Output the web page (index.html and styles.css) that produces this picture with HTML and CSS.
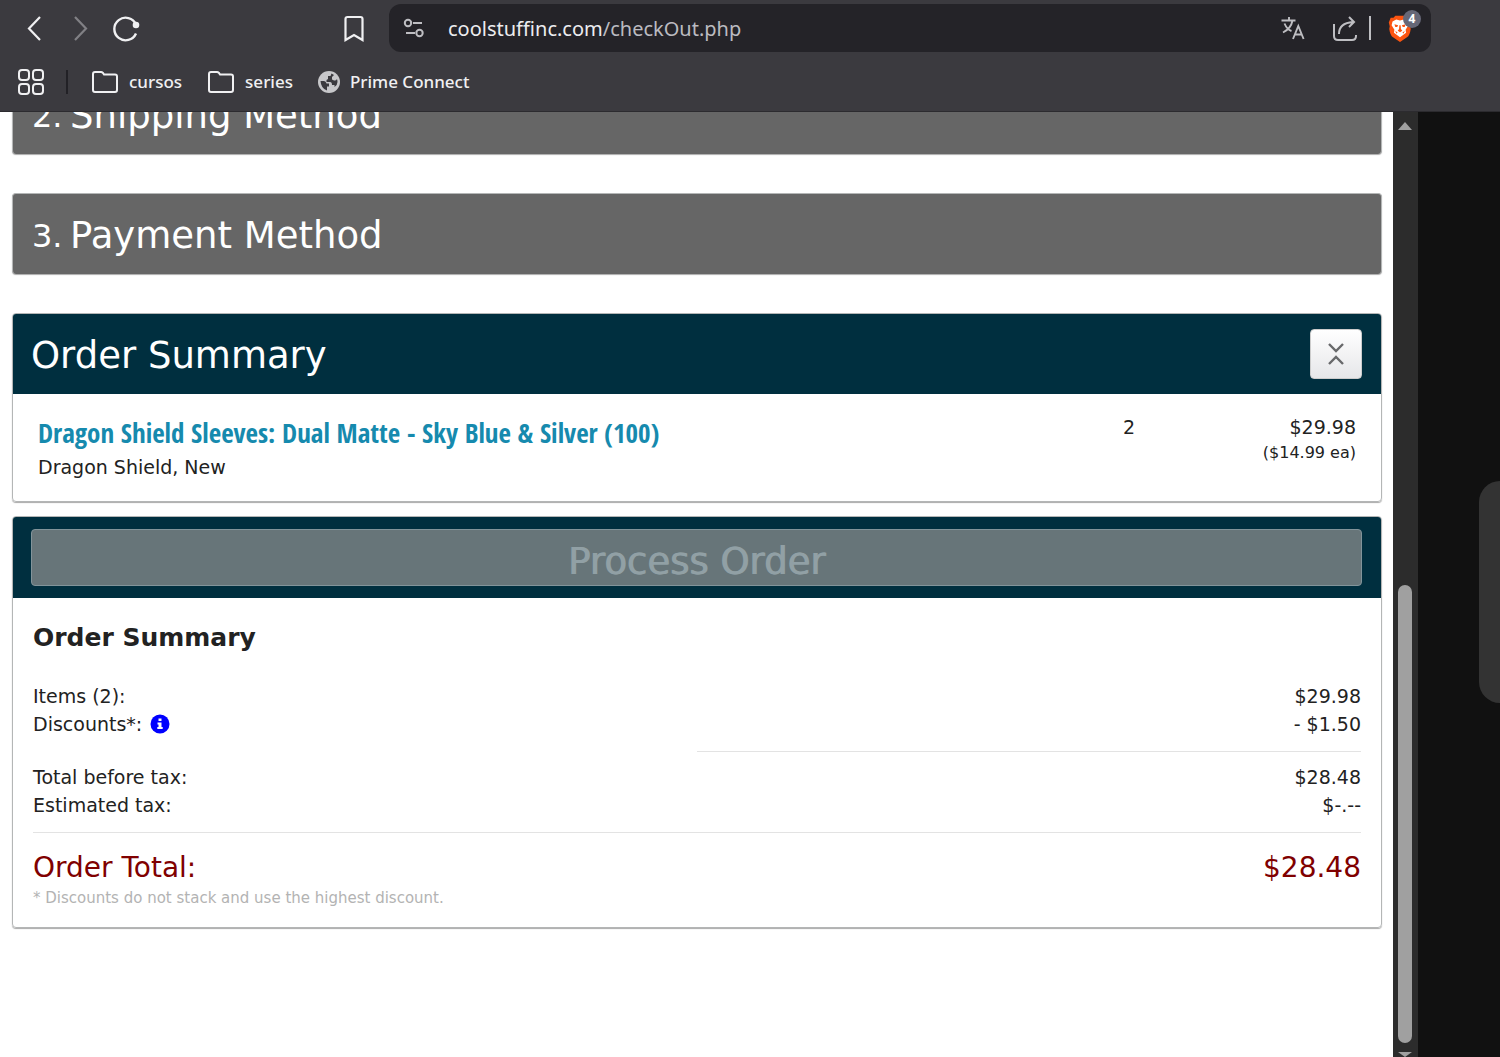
FILE: index.html
```html
<!DOCTYPE html>
<html lang="en">
<head>
<meta charset="utf-8">
<meta name="viewport" content="width=device-width, initial-scale=1">
<title>Checkout</title>
<link rel="stylesheet" href="styles.css">
</head>
<body>
<header class="chrome">
  <div class="toolbar">
    <div class="nav-buttons">
      <button class="icon-button" aria-label="Back"><svg width="28" height="32" viewBox="0 0 28 32"><path d="M19 5 8 16.500 19 28" stroke-width="2.200"/></svg></button>
      <button class="icon-button dim" aria-label="Forward"><svg width="28" height="32" viewBox="0 0 28 32"><path d="m8 5 11 11.500L8 28" stroke-width="2.200"/></svg></button>
      <button class="icon-button" aria-label="Reload"><svg width="28" height="32" viewBox="0 0 28 32"><path d="M23 12.500A11.300 11.300 0 1 0 23 21.500" stroke-width="2.400"/><circle cx="23" cy="13" r="3.300" fill="currentColor" stroke="none"/></svg></button>
    </div>
    <button class="icon-button" aria-label="Bookmark this page"><svg width="28" height="32" viewBox="0 0 28 32"><path d="M7.500 5h13q2 0 2 2v21l-8.500-5-8.500 5V7q0-2 2-2Z" stroke-width="2.200"/></svg></button>
    <div class="address">
      <button class="icon-button muted" aria-label="Site settings"><svg width="24" height="24" viewBox="0 0 24 24" stroke-width="2"><circle cx="6" cy="7" r="3.200"/><path d="M11 7h9M4 17h9"/><circle cx="17.500" cy="17" r="3.200"/></svg></button>
      <a class="url" href="#">coolstuffinc.com<span class="path">/checkOut.php</span></a>
      <div class="address-actions">
        <button class="icon-button muted" aria-label="Translate"><svg width="26" height="28" viewBox="0 0 26 28" stroke-width="1.900"><path d="M2.500 6.500h14M10 3v3.500M4 18.500Q12 14.500 13.500 6.500M5.500 9.500Q8 15.500 12.500 17M14 25l5.300-13L24.600 25M16 20.500h7"/></svg></button>
        <button class="icon-button muted" aria-label="Share"><svg width="26" height="28" viewBox="0 0 26 28" stroke-width="2"><path d="M3 10v12q0 4 4 4h14q4 0 4-4v-1M8 20q0-11 14-12M18 3l5 5-5 5"/></svg></button>
        <span class="address-divider"></span>
        <button class="icon-button shield" aria-label="Brave Shields, 4 blocked"><svg width="24" height="28" viewBox="0 0 24 30"><path d="M7 2h10l2 2h3l2 5-1 4 .5 3q-1 7-4 9L12 30l-7.500-5q-3-2-4-9L1 13 0 9l2-5h3Z" fill="#fb5410" stroke="none"/><path d="M4 8 8 6l4 1 4-1 4 2 1 4-3 5 .5 3L12 25l-6.500-5 .5-3-3-5Z" fill="#fff" stroke="none"/><path d="m6 11 4 1-1 2-2 0zm12 0-4 1 1 2 2 0zM11.300 12h1.400l.3 4 1.500 2-2.500 1.500L9.500 18l1.500-2zM7 18l2.500 2-1.500 1zm10 0-2.500 2 1.500 1z" fill="#fb5410" stroke="none"/></svg><span class="badge">4</span></button>
      </div>
    </div>
  </div>
  <nav class="bookmarks" aria-label="Bookmarks">
    <button class="icon-button" aria-label="Apps"><svg width="28" height="28" viewBox="0 0 28 28" stroke-width="2"><rect x="2" y="2" width="10" height="10" rx="3"/><rect x="16" y="2" width="10" height="10" rx="3"/><rect x="2" y="16" width="10" height="10" rx="3"/><rect x="16" y="16" width="10" height="10" rx="3"/></svg></button>
    <span class="bookmark-divider"></span>
    <a class="bookmark" href="#"><svg width="28" height="24" viewBox="0 0 28 24" stroke-width="2"><path d="M4 2h6q1 0 2 1l1 1.500h11q2 0 2 2V20q0 2-2 2H4q-2 0-2-2V4q0-2 2-2Z"/></svg>cursos</a>
    <a class="bookmark" href="#"><svg width="28" height="24" viewBox="0 0 28 24" stroke-width="2"><path d="M4 2h6q1 0 2 1l1 1.500h11q2 0 2 2V20q0 2-2 2H4q-2 0-2-2V4q0-2 2-2Z"/></svg>series</a>
    <a class="bookmark site" href="#"><svg width="22" height="22" viewBox="0 0 22 22"><circle cx="11" cy="11" r="11" fill="#c7c7ca" stroke="none"/><path d="M13.500 2.500 12.500 5H10v3L8.500 9v2H12q2 0 2 3h2.500v2q3-2 3-5 0-1.500-.5-3-1 2-3 1.500L14 8.500V6l2-2ZM2.500 10H6q2 0 2.500 2.500H11v3H9V19.500q-6-2-6.500-9.500Z" fill="#3b3a3f" stroke="none"/></svg>Prime Connect</a>
  </nav>
</header>
<div class="workspace">
  <main class="page">
    <section class="panel step"><h2><span class="step-number">2.</span>Shipping Method</h2></section>
    <section class="panel step"><h2><span class="step-number">3.</span>Payment Method</h2></section>
    <section class="panel order-items">
      <div class="panel-header">
        <h2>Order Summary</h2>
        <button class="collapse" aria-label="Collapse order summary"><svg width="18" height="24" viewBox="0 0 18 24"><path d="m2 2 7 7 7-7M2 22l7-7 7 7" fill="none" stroke="#68696b" stroke-width="2.400"/></svg></button>
      </div>
      <table class="items">
        <tr>
          <td><a class="item-name" href="#">Dragon Shield Sleeves: Dual Matte - Sky Blue &amp; Silver (100)</a><div class="item-info">Dragon Shield, New</div></td>
          <td class="quantity">2</td>
          <td class="price">$29.98<div class="unit-price">($14.99 ea)</div></td>
        </tr>
      </table>
    </section>
    <section class="panel checkout">
      <div class="panel-header process-bar"><button class="process" disabled>Process Order</button></div>
      <div class="summary">
        <h3>Order Summary</h3>
        <table class="totals">
          <tbody>
            <tr><th scope="row">Items (2):</th><td>$29.98</td></tr>
            <tr><th scope="row"><span class="discount">Discounts*: <button class="info" aria-label="About discounts"><svg width="20" height="20" viewBox="0 0 20 20"><circle cx="10" cy="10" r="9.500" fill="#00f"/><path d="M8.500 4.500h3V7h-3zM7.500 8.500h4V13h1.200v2H7.300v-2h1.200v-2.500h-1Z" fill="#fff"/></svg></button></span></th><td>- $1.50</td></tr>
          </tbody>
          <tbody class="tax">
            <tr><th scope="row">Total before tax:</th><td>$28.48</td></tr>
            <tr><th scope="row">Estimated tax:</th><td>$-.--</td></tr>
          </tbody>
          <tfoot><tr><th scope="row">Order Total:</th><td>$28.48</td></tr></tfoot>
        </table>
        <p class="note">* Discounts do not stack and use the highest discount.</p>
      </div>
    </section>
  </main>
  <div class="scrollbar" aria-hidden="true">
    <span class="arrow-up"></span>
    <span class="track-space"></span>
    <span class="thumb"></span>
    <span class="arrow-down"></span>
  </div>
  <aside class="side"><span class="handle"></span></aside>
</div>
</body>
</html>
```
FILE: styles.css
```css
* { box-sizing: border-box; }
body {
  margin: 0;
  height: 100vh;
  display: flex;
  flex-direction: column;
  overflow: hidden;
  background: #111;
  color: #222;
  font-family: "DejaVu Sans", sans-serif;
  font-size: 19px;
  line-height: 28px;
}
h2, h3, p { margin: 0; font-weight: 400; }
button { margin: 0; padding: 0; border: 0; background: none; color: inherit; font: inherit; }
a { color: inherit; text-decoration: none; }
svg { display: block; flex: none; }
table { width: 100%; border-collapse: collapse; }
th, td { padding: 0; vertical-align: top; font-weight: 400; text-align: left; }

.chrome {
  flex: none;
  height: 112px;
  background: #3b3a3f;
  border-bottom: 1px solid #2c2b2f;
  color: #f0f0f2;
  font-family: "Noto Sans", sans-serif;
}
.chrome svg { fill: none; stroke: currentColor; }
.toolbar { display: flex; align-items: center; padding: 4px 69px 0 21px; }
.nav-buttons { display: flex; gap: 18px; width: 319px; }
.icon-button { display: flex; align-items: center; justify-content: center; }
.dim { color: #818085; }
.muted { color: #bebec2; }
.address {
  flex: 1;
  display: flex;
  align-items: center;
  height: 48px;
  margin-left: 21px;
  padding: 0 15px 0 13px;
  border-radius: 12px;
  background: #242328;
}
.url { flex: 1; margin-left: 22px; padding-top: 1px; font-size: 20px; color: #ececef; }
.path { color: #bbbbc0; }
.address-actions { display: flex; align-items: center; }
.address-actions .icon-button + .icon-button { margin-left: 26px; }
.address-divider { width: 2px; height: 24px; margin: 0 17px 0 12px; background: #bebec2; }
.shield { position: relative; width: 28px; justify-content: flex-start; }
.badge {
  position: absolute;
  top: -4px;
  right: -5px;
  width: 18px;
  height: 18px;
  border-radius: 50%;
  background: #666777;
  color: #fff;
  font-size: 12px;
  font-weight: 700;
  line-height: 18px;
}
.bookmarks { display: flex; align-items: center; height: 60px; padding-left: 17px; font-size: 17px; font-weight: 500; }
.bookmark-divider { width: 2px; height: 24px; margin: 0 23px 0 21px; background: #222126; }
.bookmark { display: flex; align-items: center; gap: 10px; margin-right: 25px; }

.workspace { flex: 1; min-height: 0; display: flex; }
.page { flex: 1; overflow: hidden; padding: 0 11px 0 12px; background: #fff; }
.panel { border: 1px solid #b4b6b6; border-radius: 4px; box-shadow: 0 1px 1px #aaa; overflow: hidden; }
.panel h2 { padding-top: 4px; color: #fff; font-size: 37px; line-height: 76px; }
.step { margin-bottom: 39px; padding-left: 19px; border-width: 1px 1px 0; background: #666; }
.step:first-child { margin-top: -39px; }
.step h2 { display: flex; }
.step-number { width: 38px; font-size: 32px; }
.panel-header { display: flex; align-items: center; justify-content: space-between; height: 80px; padding: 0 19px 0 18px; background: #002f3f; }
.collapse {
  display: flex;
  align-items: center;
  justify-content: center;
  width: 52px;
  height: 50px;
  border: 1px solid #ccc;
  border-radius: 4px;
  background: linear-gradient(#fff, #e6e7e9);
}
.order-items { margin-bottom: 14px; padding-bottom: 20px; }
.items { margin-top: 19px; }
.items td:first-child { padding-left: 25px; }
.item-name {
  color: #168aae;
  font-family: "Open Sans Condensed", "Liberation Sans Narrow", "Open Sans", sans-serif;
  font-size: 27px;
  font-weight: 700;
  line-height: 40px;
}
.item-info { line-height: 28px; }
.items .quantity { width: 60px; text-align: center; }
.items .price { width: 222px; padding-right: 25px; text-align: right; }
.unit-price { font-size: 16px; line-height: 24px; }
.process-bar { height: 81px; }
.process {
  width: 100%;
  height: 57px;
  padding-top: 8px;
  border: 1px solid #82949a;
  border-radius: 4px;
  background: #677579;
  color: #91a0a5;
  font-size: 37px;
  text-shadow: 1px 0 #91a0a5;
}
.summary { padding: 22px 20px 17px; }
.summary h3 { margin-bottom: 26px; font-size: 25px; font-weight: 700; line-height: 36px; }
.totals th, .totals td { width: 50%; }
.totals td { text-align: right; }
.discount { display: flex; align-items: center; gap: 8px; }
.totals tbody tr:last-child > * { padding-bottom: 13px; }
.tax tr:first-child > * { padding-top: 11px; }
.tax tr:first-child td, .totals tfoot th, .totals tfoot td { border-top: 1px solid #e3e3e3; }
.totals tfoot th, .totals tfoot td { padding-top: 17px; color: #800000; font-size: 28px; line-height: 36px; }
.note { color: #b3b3b3; font-size: 15px; line-height: 24px; }

.scrollbar { flex: none; display: flex; flex-direction: column; align-items: center; width: 25px; padding: 10px 2px 0 0; background: #2c2c2c; }
.arrow-up, .arrow-down { flex: none; border: 7px solid transparent; }
.arrow-up { border-top: 0; border-bottom: 8px solid #a0a0a0; }
.arrow-down { margin-top: 9px; border-bottom: 0; border-top: 5px solid #a0a0a0; }
.track-space { flex: 455; }
.thumb { flex: 458; width: 14px; border-radius: 7px; background: #a0a0a0; }
.side { flex: none; display: flex; align-items: center; justify-content: flex-end; width: 82px; padding-top: 14px; background: #111; }
.handle { width: 21px; height: 222px; border-radius: 27px 0 0 27px; background: #333; }
```
